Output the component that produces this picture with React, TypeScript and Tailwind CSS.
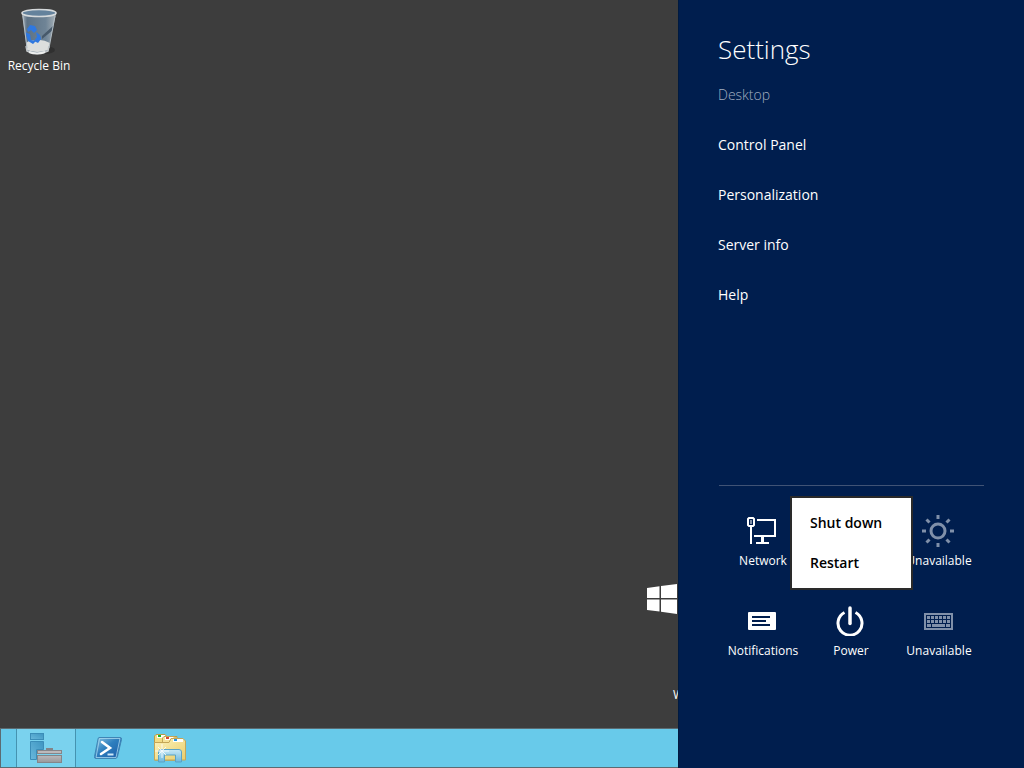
import React from "react";

const links = ["Control Panel", "Personalization", "Server info", "Help"];

function RecycleBinIcon() {
  return (
    <svg width="44" height="48" viewBox="0 0 44 48" aria-hidden="true">
      <defs>
        <linearGradient id="bin" x1="0" x2="1" y1="0" y2="0">
          <stop offset="0" stopColor="#a9b4bd" />
          <stop offset="0.15" stopColor="#5d7285" />
          <stop offset="0.7" stopColor="#6f8496" />
          <stop offset="1" stopColor="#a7b0b6" />
        </linearGradient>
      </defs>
      <ellipse cx="28" cy="42" rx="10" ry="4" fill="#303030" />
      <path d="M5 6 L10 43 Q20 48 31 43 L39 6 Z" fill="url(#bin)" />
      <path d="M37 17 L25 28 L25 31 L36 22 Z" fill="#47596a" />
      <path d="M9 35 Q13 31 18 33 Q24 30 33 35 L31 42 Q20 46 10 42 Z" fill="#dcdedd" />
      <path d="M10 21 L13 17 L18 18 L20 22 L17 25 L14 22 L11 24 Z M8 24 L13 26 L14 32 L19 33 L16 36 L11 33 Z M19 24 L23 27 L24 31 L21 35 L17 33 L20 29 Z" fill="#2f78e0" />
      <path d="M9 38 L10 43 Q20 48 31 43 L32 38" fill="none" stroke="#c3c7c9" strokeWidth="1.5" />
      <path d="M12 44 Q20 47 28 44" fill="none" stroke="#eceeee" strokeWidth="2" />
      <ellipse cx="22" cy="5" rx="17" ry="3.5" fill="#64829c" stroke="#d5d9db" strokeWidth="1.6" />
      <path d="M6 8 L10 40 M38 8 L32 40" stroke="#b4bec5" strokeWidth="1" fill="none" />
    </svg>
  );
}

function ServerManagerIcon() {
  return (
    <svg width="34" height="32" viewBox="0 0 34 32" aria-hidden="true">
      <defs>
        <linearGradient id="tower" x1="0" x2="1" y1="1" y2="0">
          <stop offset="0" stopColor="#69b8dc" />
          <stop offset="1" stopColor="#3e95c1" />
        </linearGradient>
        <linearGradient id="box" x1="0" x2="0" y1="0" y2="1">
          <stop offset="0" stopColor="#bcb9bb" />
          <stop offset="1" stopColor="#98979a" />
        </linearGradient>
      </defs>
      <rect x="1.5" y="1.5" width="13" height="6" fill="url(#tower)" stroke="#3b8db8" />
      <path d="M1.5 9.5H14.5V17.5H7.5V27.5H1.5Z" fill="url(#tower)" stroke="#3b8db8" />
      <path d="M17 16H24V18H17Z" fill="#848488" />
      <rect x="8.5" y="18.5" width="24" height="3" fill="#bcb9bb" stroke="#858589" />
      <rect x="8.5" y="23.5" width="24" height="7" fill="url(#box)" stroke="#858589" />
    </svg>
  );
}

function PowerShellIcon() {
  return (
    <svg width="30" height="24" viewBox="0 0 30 24" aria-hidden="true">
      <defs>
        <linearGradient id="ps" x1="0" x2="1" y1="0" y2="1">
          <stop offset="0" stopColor="#8cc6e4" />
          <stop offset="0.45" stopColor="#2e7fbe" />
          <stop offset="1" stopColor="#1c5aa6" />
        </linearGradient>
      </defs>
      <path d="M6 1.5H27Q29 1.5 28.5 3.5L24.5 20.5Q24 22.5 22 22.5H3Q1 22.5 1.5 20.5L5 3Q5.3 1.5 6 1.5Z" fill="url(#ps)" stroke="#3f86b5" />
      <path d="M6.5 2.5H27L23 21.5H3Z" fill="none" stroke="#a9d8ef" strokeWidth="0.8" />
      <path d="M9 6L17 12L8 18" fill="none" stroke="#fff" strokeWidth="2.6" strokeLinecap="round" />
      <path d="M14.5 18.5H20.5" stroke="#cfe9f7" strokeWidth="2" />
    </svg>
  );
}

function ExplorerIcon() {
  return (
    <svg width="34" height="32" viewBox="0 0 34 32" aria-hidden="true">
      <defs>
        <linearGradient id="folder" x1="0" x2="1" y1="0" y2="1">
          <stop offset="0" stopColor="#fdf4bd" />
          <stop offset="1" stopColor="#e8cd6c" />
        </linearGradient>
        <linearGradient id="stand" x1="0" x2="0" y1="0" y2="1">
          <stop offset="0" stopColor="#c8e9f6" />
          <stop offset="1" stopColor="#6db7dc" />
        </linearGradient>
      </defs>
      <path d="M1.5 28V4L3 2.5H12L14 4.5H24V28Z" fill="#f3dc83" stroke="#b99b4b" />
      <path d="M4 3H12V6H4Z" fill="#fff" />
      <path d="M5 3H8V5H5Z" fill="#12b825" />
      <path d="M9.5 28V6L11 4.5H21L23 6.5H24V28Z" fill="#f7e49a" stroke="#c4a657" />
      <path d="M12 5H20V8H12Z" fill="#fff" />
      <path d="M13 5H16V7H13Z" fill="#d94732" />
      <path d="M1.5 28V10.5H16L18 6.5H30L32.5 9V28Z" fill="url(#folder)" stroke="#c4a657" />
      <path d="M20 7H30V10H20Z" fill="#fff" />
      <path d="M21 7H24V9H21Z" fill="#2795e0" />
      <path d="M5.5 30V20Q5.5 17.500 8 17.5H26Q28.5 17.5 28.5 20V30H22.5V23H11.5V30Z" fill="url(#stand)" stroke="#5ba3c6" />
      <path d="M9 12V26M2 19H16M5 15L13 23M13 15L5 23" stroke="#fff" strokeWidth="1" opacity="0.8" />
    </svg>
  );
}

function WindowsLogo() {
  return (
    <svg width="30" height="30" viewBox="0 0 30 30" aria-hidden="true">
      <path d="M0 4L12.5 2.2V14H0Z M14 2L30 0V14H14Z M0 15.5H12.5V27.5L0 26Z M14 15.5H30V30L14 27.7Z" fill="#fff" />
    </svg>
  );
}

function NetworkIcon() {
  return (
    <svg width="30" height="28" viewBox="0 0 30 28" fill="none" stroke="#fff" strokeWidth="2" aria-hidden="true">
      <path d="M1 2L2 1H6L7 2V8L6 9H2L1 8Z" />
      <path d="M4 3V7" strokeWidth="1" />
      <path d="M4 9V27" />
      <path d="M10 3H28V19H7" />
      <path d="M15.5 19V25" strokeWidth="3" />
      <path d="M9 26H22" />
    </svg>
  );
}

function BrightnessIcon() {
  return (
    <svg width="32" height="32" viewBox="-16 -16 32 32" fill="none" stroke="#8090a9" strokeWidth="3" aria-hidden="true">
      <circle r="7" />
      <path d="M0 -16V-12M0 12V16M-16 0H-12M12 0H16M-11.5 -11.5L-8.5 -8.5M11.5 -11.5L8.5 -8.5M-11.5 11.5L-8.5 8.5M11.5 11.5L8.5 8.5" />
    </svg>
  );
}

function NotificationsIcon() {
  return (
    <svg width="28" height="18" viewBox="0 0 28 18" aria-hidden="true">
      <rect width="28" height="18" rx="1" fill="#fff" />
      <path d="M4 5H22M4 9H18M4 13H22" stroke="#001e4e" strokeWidth="2" />
    </svg>
  );
}

function PowerIcon() {
  return (
    <svg width="28" height="30" viewBox="0 0 28 30" fill="none" stroke="#fff" strokeWidth="3" aria-hidden="true">
      <path d="M8.5 6.5A12 12 0 1 0 19.5 6.5" />
      <path d="M14 2V17.5" strokeWidth="3.5" strokeLinecap="round" />
    </svg>
  );
}

function KeyboardIcon() {
  return (
    <svg width="29" height="17" viewBox="0 0 29 17" fill="none" stroke="#8090a9" aria-hidden="true">
      <rect x="1" y="1" width="27" height="15" strokeWidth="2" />
      <path d="M3 4.5H26M3 8.5H26" strokeWidth="3" strokeDasharray="3 1" />
      <path d="M3 12.5H7M8 12.5H21M22 12.5H26" strokeWidth="3" />
    </svg>
  );
}

const tile = "flex h-[90px] w-full flex-col items-center text-xs text-white";
const tileIcon = "flex h-10 items-center pr-0.5";

export default function App() {
  return (
    <main className="flex min-h-screen overflow-hidden bg-[#3d3d3d] font-['Open_Sans',sans-serif]">
      <section className="relative flex min-w-0 flex-1 flex-col overflow-hidden">
        <div className="flex-1 pt-2">
          <button className="flex w-[78px] flex-col items-center text-xs leading-4 text-white">
            <RecycleBinIcon />
            <span className="mt-0.5">Recycle Bin</span>
          </button>
        </div>
        {/* wallpaper branding, runs off under the settings pane */}
        <div className="absolute right-[1px] bottom-[154px]">
          <WindowsLogo />
        </div>
        <div className="absolute bottom-[65px] left-full -ml-[5px] text-xs leading-4 text-white">W</div>

        <nav aria-label="Taskbar" className="flex h-10 items-stretch border border-r-0 border-[#5b6b72] bg-[#68caea] pl-[15px]">
          <button aria-label="Server Manager" className="flex w-[60px] items-center justify-center border-x border-[#4593b0] bg-[#7ad2ee]">
            <ServerManagerIcon />
          </button>
          <button aria-label="PowerShell" className="flex w-[64px] items-center justify-center">
            <PowerShellIcon />
          </button>
          <button aria-label="File Explorer" className="flex w-[60px] items-center justify-center">
            <ExplorerIcon />
          </button>
        </nav>
      </section>

      <aside className="flex w-[346px] shrink-0 flex-col border-l border-[#001a40] bg-[#001e4e] pr-10 pl-[39px]">
        <h1 className="mt-[31px] text-[26px] leading-9 font-light text-white">Settings</h1>
        <h2 className="mt-[18px] text-sm leading-5 font-light text-[#a3aec0]">Desktop</h2>
        <ul className="mt-[30px] flex flex-col gap-[30px] text-sm leading-5 text-white">
          {links.map((name) => (
            <li key={name}>
              <a href="#">{name}</a>
            </li>
          ))}
        </ul>

        <div className="mt-auto mb-[77px] ml-px grid grid-cols-3 border-t border-[#405375] pt-[25px] pr-px">
          <button className={tile}>
            <span className={tileIcon}>
              <NetworkIcon />
            </span>
            <span className="leading-5">Network</span>
          </button>
          <div />
          <button className={tile}>
            <span className={tileIcon}>
              <BrightnessIcon />
            </span>
            <span className="leading-5">Unavailable</span>
          </button>
          <button className={tile}>
            <span className={tileIcon}>
              <NotificationsIcon />
            </span>
            <span className="leading-5">Notifications</span>
          </button>
          <div className="relative">
            <button className={tile}>
              <span className={tileIcon}>
                <PowerIcon />
              </span>
              <span className="leading-5">Power</span>
            </button>
            <div className="absolute bottom-full left-1/2 mb-[11px] -ml-[61px] flex w-[123px] flex-col border-2 border-[#2a2a2a] bg-white py-[5px] text-sm font-semibold text-black">
              <button className="h-10 pl-[18px] text-left">Shut down</button>
              <button className="h-10 pl-[18px] text-left">Restart</button>
            </div>
          </div>
          <button className={tile}>
            <span className={tileIcon}>
              <KeyboardIcon />
            </span>
            <span className="leading-5">Unavailable</span>
          </button>
        </div>
      </aside>
    </main>
  );
}
